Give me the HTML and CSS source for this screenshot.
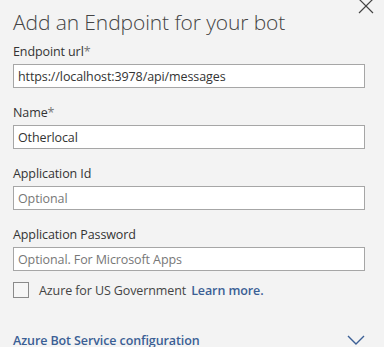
FILE: index.html
```html
<!DOCTYPE html>
<html lang="en">
<head>
    <meta charset="UTF-8">
    <meta name="viewport" content="width=device-width, initial-scale=1.0">
    <title>Add an Endpoint</title>
    <link rel="stylesheet" href="styles.css">
</head>
<body>
    <div class="dialog">
        <!-- 닫기 버튼 -->
        <button class="close" aria-label="close">
            <svg width="16" height="16" viewBox="0 0 16 16">
                <path d="M1 1 L15 15 M15 1 L1 15" stroke="#444" stroke-width="1.2" fill="none"/>
            </svg>
        </button>

        <h1 class="title">Add an Endpoint for your bot</h1>

        <div class="field">
            <label>Endpoint url<span class="req">*</span></label>
            <input type="text" value="https://localhost:3978/api/messages">
        </div>
        <div class="field">
            <label>Name<span class="req">*</span></label>
            <input type="text" value="Otherlocal">
        </div>
        <div class="field">
            <label>Application Id</label>
            <input type="text" placeholder="Optional">
        </div>
        <div class="field">
            <label>Application Password</label>
            <input type="text" placeholder="Optional. For Microsoft Apps">
        </div>

        <div class="check">
            <span class="box"></span>
            <span class="checktext">Azure for US Government</span>
            <a class="link" href="#">Learn more.</a>
        </div>

        <div class="section">
            <span class="sectiontitle">Azure Bot Service configuration</span>
            <svg class="chev" width="18" height="10" viewBox="0 0 18 10">
                <path d="M1 1 L9 9 L17 1" stroke="#3b5f95" stroke-width="1.4" fill="none"/>
            </svg>
        </div>
    </div>
</body>
</html>
```

FILE: styles.css
```css
body{
    margin:0;
    background-color:#f3f3f3;
    font-family:"Open Sans", "Noto Sans", sans-serif;
    color:#333;
}
.dialog{
    position:relative;
    padding:0 19px 0 13px;
    height:347px;
    overflow:hidden;
}
.close{
    position:absolute;
    top:-2px;
    left:358px;
    padding:0;
    border:none;
    background:none;
}
.close svg{
    display:block;
}
.title{
    margin:0;
    padding-top:7px;
    font-size:21px;
    font-weight:300;
    line-height:30px;
    color:#444;
    letter-spacing:-0.1px;
}
.field{
    display:flex;
    flex-direction:column;
    gap:2px;
    margin-bottom:15px;
}
.field:first-of-type{
    margin-top:5px;
}
label{
    font-size:12.5px;
    line-height:20px;
    letter-spacing:-0.1px;
    color:#333;
}
.req{
    color:#777;
}
input{
    box-sizing:border-box;
    width:352px;
    height:24px;
    margin:0;
    padding:0 4px;
    border:1px solid #a6a6a6;
    background-color:#fff;
    font-family:"Open Sans", "Noto Sans", sans-serif;
    font-size:12.5px;
    letter-spacing:-0.1px;
    color:#333;
    outline:none;
}
input::placeholder{
    color:#777;
}
.check{
    display:flex;
    align-items:center;
    margin-top:-6px;
    height:20px;
    font-size:12.5px;
    letter-spacing:-0.1px;
}
.box{
    box-sizing:border-box;
    width:16px;
    height:16px;
    border:1px solid #8a8a8a;
    background-color:#f6f6f6;
    margin-right:10px;
}
.checktext{
    color:#444;
    margin-right:5px;
}
.link{
    color:#3b5f95;
    font-weight:600;
    text-decoration:none;
}
.section{
    display:flex;
    justify-content:space-between;
    align-items:center;
    width:352px;
    height:18px;
    margin-top:31px;
}
.sectiontitle{
    color:#3b5f95;
    font-size:12.5px;
    font-weight:600;
    letter-spacing:-0.1px;
}
.chev{
    margin-right:0;
}
```
